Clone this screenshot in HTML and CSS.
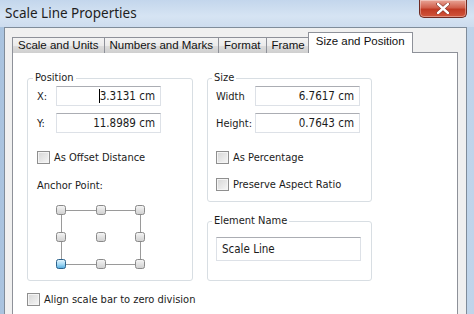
FILE: index.html
```html
<!DOCTYPE html>
<html lang="en">
<head>
  <meta charset="UTF-8" />
  <meta name="viewport" content="width=device-width, initial-scale=1.0"/>
  <title>Scale Line Properties</title>
  <link rel="stylesheet" href="styles.css">
</head>
<body>

  <div class="titlebar">
    <span class="title">Scale Line Properties</span>
    <button class="close-btn" type="button">
      <svg width="14" height="11" viewBox="0 0 14 11">
        <path d="M2 1 L12 10 M12 1 L2 10" stroke="#7a2a20" stroke-width="3.6" stroke-linecap="round"/>
        <path d="M2 1 L12 10 M12 1 L2 10" stroke="#fff" stroke-width="2.4" stroke-linecap="round"/>
      </svg>
    </button>
  </div>

  <div class="client">
    <div class="tabs">
      <div class="tab">Scale and Units</div>
      <div class="tab">Numbers and Marks</div>
      <div class="tab">Format</div>
      <div class="tab">Frame</div>
      <div class="tab active">Size and Position</div>
    </div>

    <div class="pane">
      <div class="columns">
        <fieldset class="group group-position">
          <legend>Position</legend>
          <div class="field">
            <label>X:</label>
            <div class="textbox"><span class="caret"></span>3.3131 cm</div>
          </div>
          <div class="field">
            <label>Y:</label>
            <div class="textbox">11.8989 cm</div>
          </div>
          <div class="check first-check"><span class="box"></span>As Offset Distance</div>
          <div class="anchor-label">Anchor Point:</div>
          <svg class="anchor" width="92" height="67" viewBox="0 0 92 67">
            <defs>
              <linearGradient id="nodeFill" x1="0" y1="0" x2="0" y2="1">
                <stop offset="0" stop-color="#f6f6f6"/>
                <stop offset="1" stop-color="#cfcfcf"/>
              </linearGradient>
              <linearGradient id="nodeSel" x1="0" y1="0" x2="0" y2="1">
                <stop offset="0" stop-color="#e8f6fd"/>
                <stop offset="0.5" stop-color="#a9dcf6"/>
                <stop offset="1" stop-color="#4fa9dd"/>
              </linearGradient>
            </defs>
            <g stroke="#9a9a9a" stroke-width="1">
              <line x1="6" y1="6.5" x2="85" y2="6.5"/>
              <line x1="6" y1="60.5" x2="85" y2="60.5"/>
              <line x1="6.5" y1="6" x2="6.5" y2="60"/>
              <line x1="85.5" y1="6" x2="85.5" y2="60"/>
            </g>
            <g stroke="#8a8a8a" fill="url(#nodeFill)">
              <rect x="1.5" y="1.5" width="9" height="9" rx="2"/>
              <rect x="41.5" y="1.5" width="9" height="9" rx="2"/>
              <rect x="80.5" y="1.5" width="9" height="9" rx="2"/>
              <rect x="1.5" y="28.5" width="9" height="9" rx="2"/>
              <rect x="41.5" y="28.5" width="9" height="9" rx="2"/>
              <rect x="80.5" y="28.5" width="9" height="9" rx="2"/>
              <rect x="41.5" y="55.5" width="9" height="9" rx="2"/>
              <rect x="80.5" y="55.5" width="9" height="9" rx="2"/>
            </g>
            <rect x="1.5" y="55.5" width="9" height="9" rx="2" stroke="#2c628b" fill="url(#nodeSel)"/>
          </svg>
        </fieldset>

        <div class="right-col">
          <fieldset class="group group-size">
            <legend>Size</legend>
            <div class="field">
              <label class="wide">Width</label>
              <div class="textbox">6.7617 cm</div>
            </div>
            <div class="field">
              <label class="wide">Height:</label>
              <div class="textbox">0.7643 cm</div>
            </div>
            <div class="check first-check"><span class="box"></span>As Percentage</div>
            <div class="check"><span class="box"></span>Preserve Aspect Ratio</div>
          </fieldset>

          <fieldset class="group group-name">
            <legend>Element Name</legend>
            <div class="textbox name-box">Scale Line</div>
          </fieldset>
        </div>
      </div>

      <div class="check align-check"><span class="box"></span>Align scale bar to zero division</div>
    </div>
  </div>

</body>
</html>
```

FILE: styles.css
```css
body {
  margin: 0;
  width: 474px;
  height: 314px;
  overflow: hidden;
  font-family: "DejaVu Sans Condensed", "Liberation Sans", sans-serif;
  font-size: 11px;
  color: #1b1b1b;
  background: linear-gradient(90deg, #a9c3df 0%, #c9dbee 30%, #d3e2f2 70%, #bfd4ea 100%);
}

.titlebar {
  height: 27px;
  display: flex;
  justify-content: space-between;
  align-items: flex-start;
  padding: 0 7px 0 5px;
  background: linear-gradient(180deg, #c3d6ec 0%, #d6e4f3 60%, #cddcee 100%);
}

.title {
  font-family: "Noto Sans", "Liberation Sans", sans-serif;
  font-size: 13.5px;
  line-height: 27px;
  color: #1e1e1e;
}

.close-btn {
  width: 48px;
  height: 18px;
  padding: 0;
  border: 1px solid #6e2a22;
  border-top: none;
  border-radius: 0 0 5px 5px;
  background: linear-gradient(180deg, #e9a597 0%, #d1604c 45%, #c03a24 55%, #d1563c 100%);
  box-shadow: inset 0 0 0 1px rgba(255,255,255,0.35);
  display: flex;
  align-items: center;
  justify-content: center;
}

.client {
  margin: 0 7px 0 4px;
  height: 287px;
  box-sizing: border-box;
  border: 1px solid #7f8c9a;
  border-bottom: none;
  background: #f0f0f0;
  padding: 5px 8px 0 7px;
  display: flex;
  flex-direction: column;
}

.tabs {
  display: flex;
  align-items: flex-end;
  height: 20px;
  position: relative;
  z-index: 1;
  margin-bottom: -1px;
}

.tab {
  font-family: "Liberation Sans", sans-serif;
  font-size: 11.5px;
  height: 15px;
  line-height: 15px;
  padding: 0 5px;
  border: 1px solid #8e9199;
  border-bottom: none;
  margin-right: -1px;
  background: linear-gradient(180deg, #f3f3f3 0%, #ebebeb 50%, #dddddd 51%, #cfcfcf 100%);
  color: #111;
}

.tab.active {
  height: 20px;
  line-height: 16px;
  padding: 0 7px;
  margin-left: -2px;
  background: #fff;
}

.pane {
  flex: 1;
  background: #fff;
  border: 1px solid #8e9199;
  border-bottom: none;
  padding: 18px 14px 0 14px;
}

.columns {
  display: grid;
  grid-template-columns: 166px 165px;
  column-gap: 14px;
}

.group {
  margin: 0;
  border: 1px solid #d8dee3;
  border-radius: 3px;
  padding: 1px 9px 0 9px;
  min-width: 0;
}

.group legend {
  padding: 0 2px;
  margin-left: -4px;
  line-height: 14px;
}

.group-position {
  padding-bottom: 9px;
}

.group-size {
  padding: 1px 8px 10px 8px;
}

.right-col {
  display: flex;
  flex-direction: column;
  gap: 12px;
}

.group-name {
  flex: 1;
  padding: 1px 9px 0 8px;
}

.field {
  display: flex;
  align-items: center;
  height: 20px;
  margin-top: 7px;
}

.field:first-of-type {
  margin-top: 0;
}

.field label {
  width: 19px;
}

.field label.wide {
  width: 39px;
}

.textbox {
  width: 105px;
  height: 20px;
  box-sizing: border-box;
  border: 1px solid #dde1e7;
  border-top-color: #abadb3;
  text-align: right;
  padding-right: 5px;
  line-height: 18px;
  font-size: 11.5px;
  background: #fff;
}

.caret {
  display: inline-block;
  width: 0;
  height: 14px;
  border-left: 1px solid #000;
  vertical-align: -3px;
}

.name-box {
  width: 145px;
  height: 24px;
  line-height: 22px;
  margin-top: 8px;
  text-align: left;
  padding: 0 0 0 5px;
}

.check {
  display: flex;
  align-items: center;
  gap: 4px;
  height: 13px;
  margin-top: 14px;
}

.check.first-check {
  margin-top: 18px;
}

.box {
  width: 11px;
  height: 11px;
  border: 1px solid #8f8f8f;
  background: linear-gradient(135deg, #d6d6d6 0%, #e9e9e9 60%, #f7f7f7 100%);
  box-shadow: inset 0 0 0 1px #f4f4f4;
}

.anchor-label {
  margin-top: 15px;
  line-height: 14px;
}

.anchor {
  display: block;
  margin: 11px 0 0 18px;
}

.align-check {
  margin-top: 12px;
}
```
